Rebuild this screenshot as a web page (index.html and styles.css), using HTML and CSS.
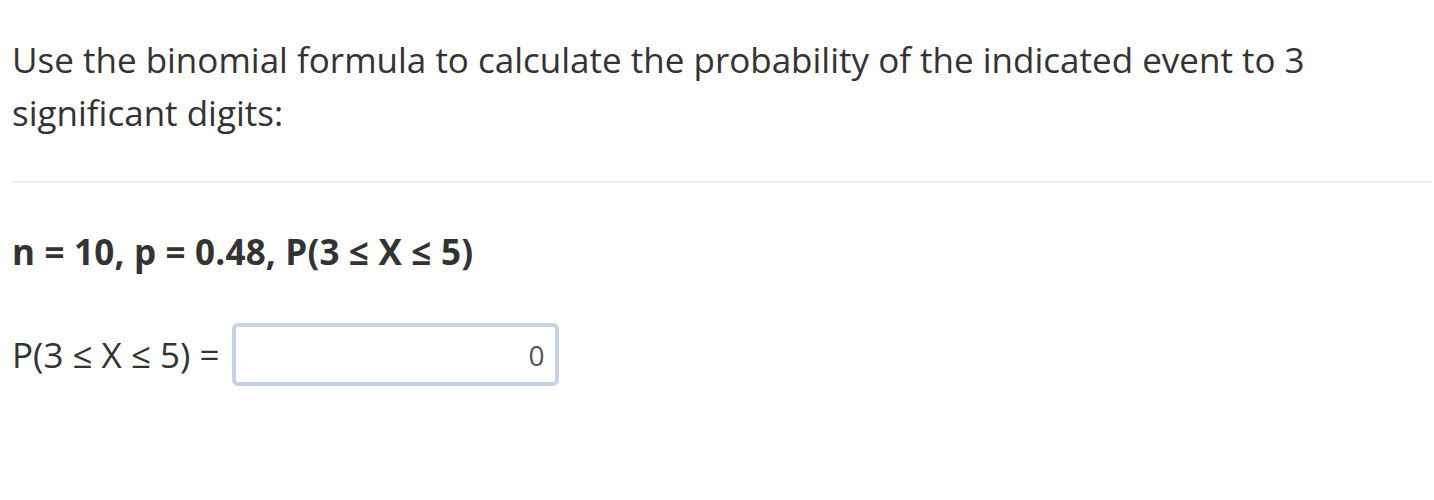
FILE: index.html
```html
<!DOCTYPE html>
<html>
<head>
<meta charset="utf-8">
<link rel="stylesheet" href="styles.css">
</head>
<body>
<div class="page">
  <p class="intro">Use the binomial formula to calculate the probability of the indicated event to 3 significant digits:</p>
  <hr class="divider">
  <p class="given">n = 10, p = 0.48, P(3 ≤ X ≤ 5)</p>
  <div class="answer">
    <span class="label">P(3 ≤ X ≤ 5) =</span>
    <input class="field" type="text" value="0">
  </div>
</div>
</body>
</html>
```
FILE: styles.css
```css
html, body {
  margin: 0;
  padding: 0;
  background: #fff;
}
.page {
  padding: 0 2px 0 12px;
  font-family: "Open Sans", sans-serif;
  color: #333;
  font-size: 35px;
}
.intro {
  margin: 0;
  padding-top: 33px;
  line-height: 53px;
}
.divider {
  border: 0;
  border-top: 2px solid #eee;
  margin: 42px 0 0 0;
}
.given {
  margin: 42px 0 0 0;
  font-weight: 700;
  letter-spacing: 0.2px;
  line-height: 53px;
}
.answer {
  display: flex;
  align-items: center;
  gap: 13px;
  margin-top: 45px;
}
.label {
  line-height: 53px;
}
.field {
  width: 327px;
  height: 63px;
  box-sizing: border-box;
  border: 4px solid #c5d3ea;
  border-radius: 6px;
  font-family: "Open Sans", sans-serif;
  font-size: 28px;
  color: #555;
  text-align: right;
  padding: 0 11px;
  outline: none;
}
```
